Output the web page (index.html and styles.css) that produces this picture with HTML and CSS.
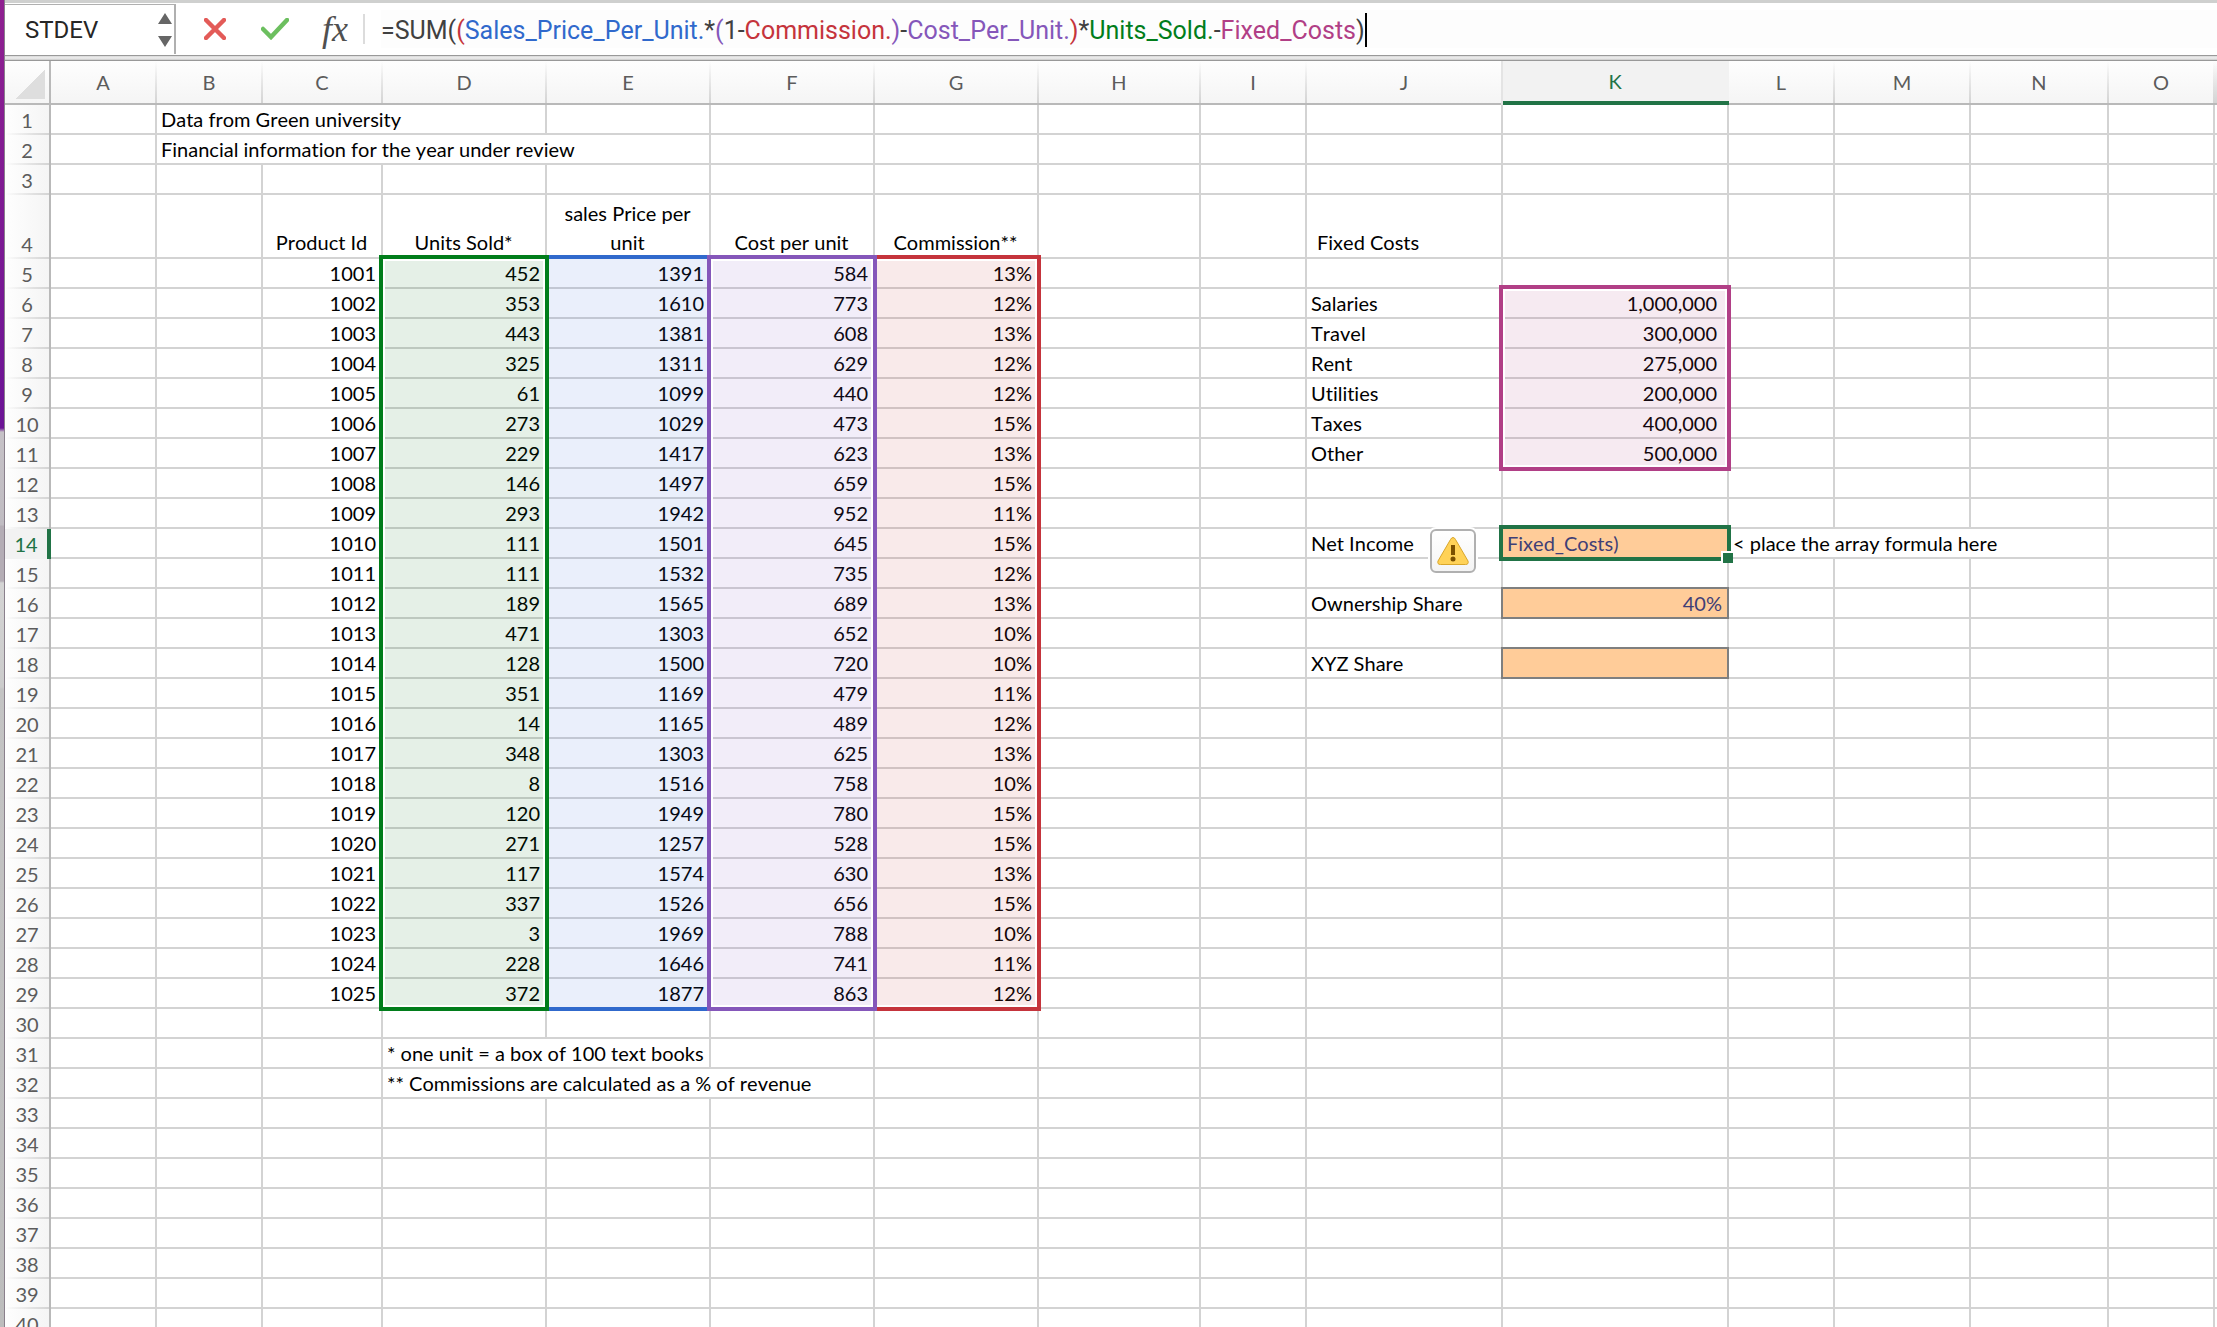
FILE: index.html
```html
<!DOCTYPE html>
<html lang="en">
<head>
    <meta charset="UTF-8">
    <meta name="viewport" content="width=device-width, initial-scale=1.0">
    <title>Green university - Net Income</title>
    <link rel="stylesheet" href="styles.css">
</head>
<body>

    <div class="desktop-edge"></div>

    <main class="workbook">
        <div class="formula-bar">
            <div class="name-box">
                <input type="text" class="name-input" value="STDEV" aria-label="Name box">
                <button type="button" class="name-arrows" aria-label="Choose a name">
                    <svg width="14" height="34" viewBox="0 0 14 34">
                        <path d="M7 0L14 11H0zM0 23H14L7 34z" fill="#666"/>
                    </svg>
                </button>
            </div>
            <button type="button" class="bar-button" aria-label="Cancel">
                <svg width="22" height="22" viewBox="0 0 22 22">
                    <path d="M2 2L20 20M20 2L2 20" fill="none" stroke="#e35b58" stroke-width="4.500" stroke-linecap="round"/>
                </svg>
            </button>
            <button type="button" class="bar-button" aria-label="Enter">
                <svg width="28" height="22" viewBox="0 0 28 22">
                    <path d="M2 11L10 19L26 2" fill="none" stroke="#6cbf5f" stroke-width="4.500" stroke-linecap="round"/>
                </svg>
            </button>
            <button type="button" class="bar-button fx">fx</button>
            <div class="formula" contenteditable="true" role="textbox" aria-label="Formula" spellcheck="false">=SUM(<span class="red">(</span><span class="blue">Sales_Price_Per_Unit.</span>*<span class="purple">(</span>1-<span class="red">Commission.</span><span class="purple">)</span>-<span class="purple">Cost_Per_Unit.</span><span class="red">)</span>*<span class="green">Units_Sold.</span>-<span class="pink">Fixed_Costs</span>)<i class="caret"></i></div>
        </div>

        <table class="sheet">
            <colgroup>
                <col class="col-head">
                <col class="col-s"><col class="col-s"><col class="col-c">
                <col class="col-d"><col class="col-d"><col class="col-d"><col class="col-d">
                <col class="col-h"><col class="col-s"><col class="col-j"><col class="col-k">
                <col class="col-s"><col class="col-m"><col class="col-n"><col class="col-s">
                <col>
            </colgroup>
            <thead>
                <tr id="letters"><th class="corner"></th></tr>
            </thead>
            <tbody id="rows"></tbody>
        </table>
    </main>

    <script>
        const letters = 'ABCDEFGHIJKLMNO'.split('');

        // id, units sold, sales price, cost, commission
        const products = [
            [1001, 452, 1391, 584, 13], [1002, 353, 1610, 773, 12], [1003, 443, 1381, 608, 13],
            [1004, 325, 1311, 629, 12], [1005, 61, 1099, 440, 12], [1006, 273, 1029, 473, 15],
            [1007, 229, 1417, 623, 13], [1008, 146, 1497, 659, 15], [1009, 293, 1942, 952, 11],
            [1010, 111, 1501, 645, 15], [1011, 111, 1532, 735, 12], [1012, 189, 1565, 689, 13],
            [1013, 471, 1303, 652, 10], [1014, 128, 1500, 720, 10], [1015, 351, 1169, 479, 11],
            [1016, 14, 1165, 489, 12], [1017, 348, 1303, 625, 13], [1018, 8, 1516, 758, 10],
            [1019, 120, 1949, 780, 15], [1020, 271, 1257, 528, 15], [1021, 117, 1574, 630, 13],
            [1022, 337, 1526, 656, 15], [1023, 3, 1969, 788, 10], [1024, 228, 1646, 741, 11],
            [1025, 372, 1877, 863, 12]
        ];
        const costs = [
            ['Salaries', '1,000,000'], ['Travel', '300,000'], ['Rent', '275,000'],
            ['Utilities', '200,000'], ['Taxes', '400,000'], ['Other', '500,000']
        ];

        const warning = `<button type="button" class="warning" aria-label="Error options">
            <svg width="32" height="28" viewBox="0 0 32 28">
                <path d="M16 .5Q17.500 .5 18.500 2.500L31 24Q32 27.500 28.500 27.500H3.500Q0 27.500 1 24L13.500 2.500Q14.500 .5 16 .5z" fill="#ffd257" stroke="#d9a62b"/>
                <path d="M14 8h4v10h-4z" fill="#7b5000"/>
                <circle cx="16" cy="22" r="2.500" fill="#7b5000"/>
            </svg></button>`;

        // text, class, how many columns the text runs over
        const cells = {
            B1: { text: 'Data from Green university', span: 3 },
            B2: { text: 'Financial information for the year under review', span: 4 },
            C4: { text: 'Product Id', cls: 'center' },
            D4: { text: 'Units Sold*', cls: 'center' },
            E4: { text: 'sales Price per unit', cls: 'center wrap' },
            F4: { text: 'Cost per unit', cls: 'center' },
            G4: { text: 'Commission**', cls: 'center' },
            J4: { text: 'Fixed Costs', cls: 'indent' },
            J14: { text: 'Net Income', extra: warning },
            K14: { text: 'Fixed_Costs)', cls: 'input', extra: '<span class="active-cell"></span>' },
            L14: { text: '&lt; place the array formula here', span: 3 },
            J16: { text: 'Ownership Share' },
            K16: { text: '40%', cls: 'input boxed number' },
            J18: { text: 'XYZ Share' },
            K18: { text: '', cls: 'input boxed' },
            D31: { text: '* one unit = a box of 100 text books', span: 2 },
            D32: { text: '** Commissions are calculated as a % of revenue', span: 3 }
        };

        products.forEach(function(p, i) {
            const r = i + 5;
            cells['C' + r] = { text: p[0], cls: 'number' };
            cells['D' + r] = { text: p[1], cls: 'number' };
            cells['E' + r] = { text: p[2], cls: 'number' };
            cells['F' + r] = { text: p[3], cls: 'number' };
            cells['G' + r] = { text: p[4] + '%', cls: 'number' };
        });
        costs.forEach(function(c, i) {
            cells['J' + (i + 6)] = { text: c[0] };
            cells['K' + (i + 6)] = { text: c[1], cls: 'number money' };
        });

        // coloured frames of the named ranges, hung on their first cell
        const ranges = { D5: ['green', 25], E5: ['blue', 25], F5: ['purple', 25], G5: ['red', 25], K6: ['pink', 6] };
        for (const key in ranges) {
            cells[key].extra = `<span class="range range-${ranges[key][0]}" style="--rows: ${ranges[key][1]}"></span>`;
        }

        document.getElementById('letters').innerHTML += letters.map(function(l) {
            return `<th scope="col"${l === 'K' ? ' class="current"' : ''}>${l}</th>`;
        }).join('') + '<th></th>';

        let html = '';
        for (let r = 1; r <= 40; r++) {
            html += `<tr${r === 4 ? ' class="tall"' : ''}><th scope="row"${r === 14 ? ' class="current"' : ''}>${r}</th>`;
            for (let c = 0; c < letters.length; c++) {
                const cell = cells[letters[c] + r];
                if (!cell) {
                    html += '<td></td>';
                    continue;
                }
                const span = cell.span || 1;
                html += `<td class="${cell.cls || 'text'}" colspan="${span}">${cell.text}${cell.extra || ''}</td>`;
                c += span - 1;
            }
            html += '<td></td></tr>';
        }
        document.getElementById('rows').innerHTML = html;
    </script>

</body>
</html>
```
FILE: styles.css
```css
* {
    box-sizing: border-box;
}
body {
    display: grid;
    grid-template-columns: 5px 1fr;
    height: 100vh;
    margin: 0;
    overflow: hidden;
    background-color: #ffffff;
    font-family: Lato, "Liberation Sans", sans-serif;
    font-size: 20px;
    font-kerning: none;
    font-variant-ligatures: none;
    color: #000000;
}
button {
    padding: 0;
    border: none;
    background: none;
    cursor: pointer;
}
svg {
    display: block;
}
.desktop-edge {
    border-right: 1px solid #8a808c;
    background: linear-gradient(#8f2090, #6c1496 428px, #c6c2c7 432px, #c0bcc2 525px, #b4adb5 526px, #b4adb5 581px, #d4d4d4 583px, #cccccc 687px, #c4c4c4 689px, #bdbdbd);
}
.workbook {
    overflow: hidden;
}

/* formula bar */
.formula-bar {
    display: flex;
    align-items: center;
    height: 61px;
    padding-bottom: 5px;
    border-top: 3px solid #cfd0cf;
    border-bottom: 1px solid #999999;
    background: linear-gradient(#ffffff 52px, #999999 52px, #999999 53px, #d8d8d8 53px, #efefef 55px, #c8c8c8);
    font-family: Roboto, "Liberation Sans", sans-serif;
    font-size: 25px;
    color: #404040;
}
.name-box {
    display: flex;
    align-items: center;
    width: 171px;
    height: 50px;
    margin-right: 28px;
    border-top: 1px solid #b0b0b0;
    border-right: 2px solid #b0b0b0;
}
.name-input {
    flex: 1;
    min-width: 0;
    padding: 0 0 0 20px;
    border: none;
    outline: none;
    background: none;
    font: inherit;
    font-size: 24px;
    color: #262626;
}
.name-arrows {
    margin-right: 2px;
}
.bar-button {
    margin-right: 35px;
}
.fx {
    width: 44px;
    height: 30px;
    margin: 0 16px 0 -3px;
    padding-right: 14px;
    border-right: 2px solid #dcdcdc;
    font-family: "Liberation Serif", serif;
    font-size: 36px;
    font-style: italic;
    line-height: 26px;
    color: #505050;
}
.formula {
    display: flex;
    align-items: center;
    flex: 1;
    height: 38px;
    padding-top: 2px;
    outline: none;
    background-color: #fdfdfd;
    white-space: nowrap;
}
.caret {
    width: 2px;
    height: 34px;
    background-color: #000000;
}
.red {
    color: #c5343c;
}
.blue {
    color: #3069cc;
}
.purple {
    color: #8557ba;
}
.green {
    color: #017d1b;
}
.pink {
    color: #b13f86;
}

/* grid */
.sheet {
    width: 100%;
    table-layout: fixed;
    border-collapse: separate;
    border-spacing: 0;
}
.col-head {
    width: 46px;
}
.col-s {
    width: 106px;
}
.col-c {
    width: 120px;
}
.col-d {
    width: 164px;
}
.col-h {
    width: 162px;
}
.col-j {
    width: 196px;
}
.col-k {
    width: 226px;
}
.col-m {
    width: 136px;
}
.col-n {
    width: 138px;
}
th {
    padding: 0 2px 0 0;
    font-weight: normal;
    color: #5c5c5c;
}
thead th {
    height: 44px;
    border-bottom: 2px solid #b9b9b9;
    background: linear-gradient(#ffffff00, #d4d4d4) right / 2px 100% no-repeat, linear-gradient(#fefefe, #f5f5f5);
}
thead .corner {
    border-right: 2px solid #b9b9b9;
    background: linear-gradient(to bottom right, transparent 50%, #dedede 50%) 11px 8px / 29px 30px no-repeat, linear-gradient(#fefefe, #f5f5f5);
}
thead .current {
    border-bottom: 4px solid #217346;
    background: #f2f2f2;
    box-shadow: -2px 0 0 #e4e4e4, -2px 0 0 #217346;
    color: #217346;
}
tbody th {
    height: 30px;
    padding: 0;
    border-right: 2px solid #b9b9b9;
    background: linear-gradient(to right, #ffffff00, #d4d4d4) bottom / 100% 2px no-repeat, linear-gradient(to right, #fefefe, #f5f5f5);
    line-height: 28px;
}
tbody .current {
    border-right: 4px solid #217346;
    background: #f2f2f2;
    color: #217346;
}
td {
    position: relative;
    height: 30px;
    padding: 0 5px 0 4px;
    border-right: 2px solid #d3d3d3;
    border-bottom: 2px solid #d3d3d3;
    line-height: 28px;
    white-space: nowrap;
}
td:last-child {
    padding: 0;
    border-right: none;
}
.tall th,
.tall td {
    height: 64px;
    vertical-align: bottom;
    line-height: 29px;
}
.number {
    text-align: right;
}
.money {
    padding-right: 10px;
}
.center {
    text-align: center;
}
.wrap {
    white-space: normal;
}
.indent {
    padding-left: 10px;
}
.input {
    background-color: #ffcc99;
    color: #3f3f76;
}
.boxed {
    border-color: #7f7f7f;
    box-shadow: -2px 0 0 #7f7f7f, 0 -2px 0 #7f7f7f, -2px -2px 0 #7f7f7f;
}

/* frames over the cells */
.range {
    position: absolute;
    z-index: 1;
    top: -4px;
    left: -4px;
    right: -4px;
    height: calc(var(--rows) * 30px + 6px);
    border: 4px solid;
    box-shadow: inset 0 0 0 2px #ffffff;
    pointer-events: none;
}
.range-green {
    z-index: 2;
    border-color: #017d1b;
    background-color: rgba(1, 110, 20, 0.1);
}
.range-blue {
    border-color: #3069cc;
    background-color: rgba(48, 95, 214, 0.1);
    box-shadow: none;
}
.range-purple {
    z-index: 2;
    border-color: #8557ba;
    background-color: rgba(133, 87, 200, 0.11);
}
.range-red {
    border-color: #c5343c;
    background-color: rgba(197, 52, 50, 0.1);
}
.range-pink {
    border-color: #b13f86;
    background-color: rgba(177, 63, 124, 0.11);
}
.active-cell {
    position: absolute;
    z-index: 1;
    top: -4px;
    left: -4px;
    right: -4px;
    bottom: -4px;
    border: 4px solid #217346;
}
/* fill handle */
.active-cell::after {
    content: "";
    position: absolute;
    right: -6px;
    bottom: -6px;
    width: 10px;
    height: 10px;
    background-color: #217346;
    box-shadow: -2px -2px 0 #ffffff;
}
.warning {
    position: absolute;
    z-index: 2;
    top: 0;
    right: 25px;
    display: flex;
    align-items: center;
    justify-content: center;
    width: 46px;
    height: 44px;
    border: 2px solid #b0b0b0;
    border-radius: 6px;
    background: linear-gradient(#ffffff, #f4f4f4);
    box-shadow: 0 0 0 2px #ffffff;
}
```
